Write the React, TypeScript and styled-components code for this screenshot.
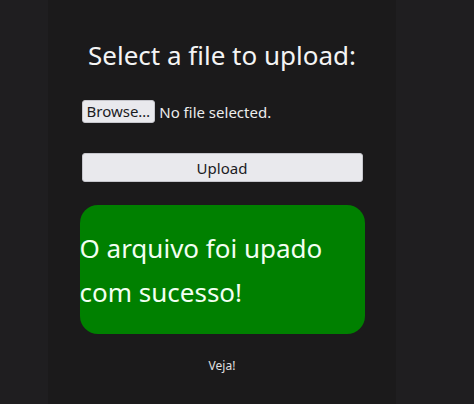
import React from "react";
import styled, { createGlobalStyle } from "styled-components";

const GlobalStyle = createGlobalStyle`
  html, body {
    margin: 0;
    background: #1f1e20;
    color: #fff;
    font-family: "Noto Sans", "Open Sans", sans-serif;
  }
`;

export default function App() {
  return (
    <>
      <GlobalStyle />
      <Page>
        <Column>
          <Title>Select a file to upload:</Title>
          <UploadForm onSubmit={(e) => e.preventDefault()}>
            <FileRow>
              <BrowseButton type="button">Browse…</BrowseButton>
              <FileLabel>No file selected.</FileLabel>
            </FileRow>
            <SubmitButton type="submit">Upload</SubmitButton>
          </UploadForm>
          <SuccessBox>O arquivo foi upado com sucesso!</SuccessBox>
          <Footer>Veja!</Footer>
        </Column>
      </Page>
    </>
  );
}

const Page = styled.div`
  padding-left: 48px;
  min-height: 404px;
`;

const Column = styled.main`
  width: 348px;
  min-height: 404px;
  background: #1b1a1b;
  display: flex;
  flex-direction: column;
  align-items: center;
  padding-top: 35px;
  box-sizing: border-box;
`;

const Title = styled.h1`
  margin: 0;
  font-size: 26px;
  font-weight: 400;
  line-height: 40px;
  color: #f4f4f4;
`;

const UploadForm = styled.form`
  width: 281px;
  margin-top: 25px;
  display: flex;
  flex-direction: column;
  gap: 30px;
`;

const FileRow = styled.div`
  display: flex;
  align-items: center;
  gap: 4px;
`;

const GreyButton = styled.button`
  font-family: "Noto Sans", "Open Sans", sans-serif;
  font-size: 15px;
  color: #1b1b1f;
  background: #e9e9ed;
  border: 1px solid #c6c6cc;
  border-radius: 3px;
  padding: 0 4px;
  cursor: pointer;
`;

const BrowseButton = styled(GreyButton)`
  height: 23px;
  line-height: 21px;
`;

const FileLabel = styled.span`
  font-size: 15px;
  color: #ececec;
`;

const SubmitButton = styled(GreyButton)`
  width: 100%;
  height: 29px;
`;

const SuccessBox = styled.div`
  width: 285px;
  height: 129px;
  margin-top: 23px;
  background: #008000;
  border-radius: 18px;
  display: flex;
  align-items: center;
  font-size: 26px;
  line-height: 44px;
  color: #f2fff2;
  box-sizing: border-box;
  padding-right: 40px;
`;

const Footer = styled.p`
  margin: 23px 0 0;
  font-size: 12px;
  color: #e0e0e0;
`;
